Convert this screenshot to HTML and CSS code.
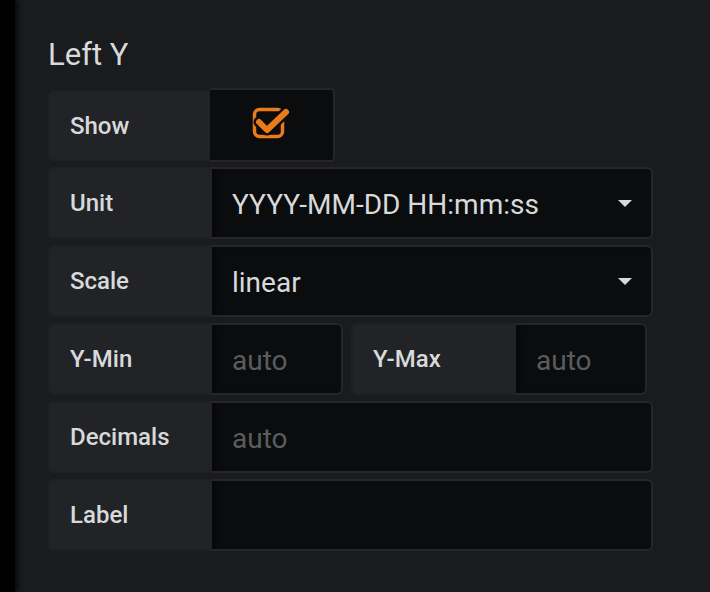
FILE: index.html
```html
<!DOCTYPE html>
<html lang="en">
<head>
    <meta charset="UTF-8">
    <meta name="viewport" content="width=device-width, initial-scale=1.0">
    <title>Axes - Left Y</title>
    <link rel="stylesheet" href="styles.css">
</head>
<body>
    <div class="sidebar"></div>

    <div class="editor">
        <h5 class="section-heading">Left Y</h5>

        <div class="gf-form">
            <label class="gf-form-label label-show">Show</label>
            <div class="gf-form-switch">
                <svg class="checkbox" width="40" height="36" viewBox="0 0 40 36">
                    <rect x="3.5" y="4.5" width="28" height="27" rx="5" fill="none" stroke="#eb7b18" stroke-width="3.5"/>
                    <path d="M8 17 L16 25 L35 7" fill="none" stroke="#0b0c0e" stroke-width="11" stroke-linecap="round" stroke-linejoin="round"/>
                    <path d="M8 17 L16 25 L35 7" fill="none" stroke="#eb7b18" stroke-width="6" stroke-linecap="round" stroke-linejoin="round"/>
                </svg>
            </div>
        </div>

        <div class="gf-form">
            <label class="gf-form-label">Unit</label>
            <div class="gf-form-input select wide">
                <span>YYYY-MM-DD HH:mm:ss</span>
                <span class="caret"></span>
            </div>
        </div>

        <div class="gf-form">
            <label class="gf-form-label">Scale</label>
            <div class="gf-form-input select wide">
                <span>linear</span>
                <span class="caret"></span>
            </div>
        </div>

        <div class="gf-form-inline">
            <div class="gf-form">
                <label class="gf-form-label">Y-Min</label>
                <div class="gf-form-input narrow"><span class="placeholder">auto</span></div>
            </div>
            <div class="gf-form">
                <label class="gf-form-label label-max">Y-Max</label>
                <div class="gf-form-input narrow"><span class="placeholder">auto</span></div>
            </div>
        </div>

        <div class="gf-form">
            <label class="gf-form-label">Decimals</label>
            <div class="gf-form-input wide"><span class="placeholder">auto</span></div>
        </div>

        <div class="gf-form">
            <label class="gf-form-label">Label</label>
            <div class="gf-form-input wide"></div>
        </div>
    </div>
</body>
</html>
```

FILE: styles.css
```css
html, body {
    margin: 0;
    height: 100%;
}
body {
    display: flex;
    background-color: #1a1b1d;
    font-family: Roboto, "Liberation Sans", sans-serif;
    color: #d8d9da;
    overflow: hidden;
}
.sidebar {
    width: 15px;
    flex-shrink: 0;
    background-color: #000;
    box-shadow: 2px 0 6px rgba(0, 0, 0, 0.9);
}
.editor {
    padding: 36px 0 0 33px;
}
.section-heading {
    margin: 0 0 15px 0;
    font-size: 31px;
    font-weight: 400;
    line-height: 38px;
    color: #d8d9da;
}
.gf-form {
    display: flex;
    align-items: stretch;
    height: 72px;
    margin-bottom: 6px;
}
.gf-form-inline {
    display: flex;
    gap: 8px;
}
.gf-form-label {
    box-sizing: border-box;
    width: 164px;
    display: flex;
    align-items: center;
    padding-left: 20px;
    background-color: #212327;
    border: 2px solid #1f2023;
    border-right: none;
    border-radius: 6px 0 0 6px;
    font-size: 24px;
    font-weight: 500;
    color: #d8d9da;
}
.label-show {
    width: 162px;
    height: 71px;
    margin-top: 1px;
}
.label-max {
    width: 165px;
}
.gf-form-switch {
    box-sizing: border-box;
    width: 125px;
    height: 74px;
    margin-top: -1px;
    display: flex;
    align-items: center;
    justify-content: center;
    background-color: #0b0c0e;
    border: 2px solid #262628;
    border-left: none;
    border-radius: 0 4px 4px 0;
}
.checkbox {
    margin: -5px 2px 0 0;
}
.gf-form-input {
    box-sizing: border-box;
    display: flex;
    align-items: center;
    padding: 2px 20px 0 20px;
    background-color: #0b0c0e;
    border: 2px solid #262628;
    border-left: none;
    border-radius: 0 6px 6px 0;
    box-shadow: inset 6px 0 6px -4px rgba(0, 0, 0, 0.6);
    font-size: 28px;
    color: #d8d9da;
}
.wide {
    width: 441px;
}
.narrow {
    width: 131px;
}
.select {
    justify-content: space-between;
}
.placeholder {
    color: #5b5c5e;
}
.caret {
    width: 0;
    height: 0;
    border-left: 7px solid transparent;
    border-right: 7px solid transparent;
    border-top: 7px solid #d8d9da;
    margin: -2px -1px 0 0;
}
```
